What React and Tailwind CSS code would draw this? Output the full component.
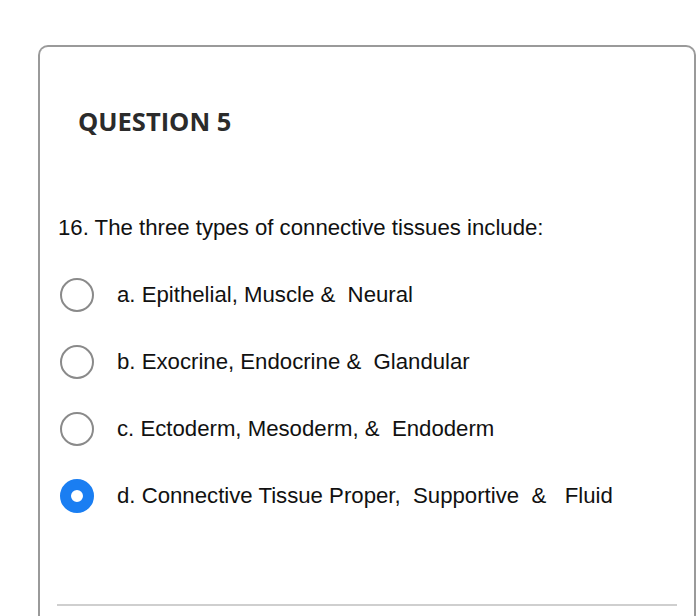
const options = [
  { label: 'a. Epithelial, Muscle &\u00a0 Neural', selected: false },
  { label: 'b. Exocrine, Endocrine &\u00a0 Glandular', selected: false },
  { label: 'c. Ectoderm, Mesoderm, &\u00a0 Endoderm', selected: false },
  {
    label: 'd. Connective Tissue Proper,\u00a0 Supportive\u00a0 &\u00a0\u00a0 Fluid',
    selected: true,
  },
];

function Radio({ selected }) {
  return selected ? (
    <span className="box-border block h-[34px] w-[34px] shrink-0 rounded-full border-[11px] border-[#1a7ef2] bg-white" />
  ) : (
    <span className="box-border block h-[34px] w-[34px] shrink-0 rounded-full border-2 border-[#8a8a8a] bg-white" />
  );
}

export default function App() {
  return (
    <div className="h-[616px] w-[700px] overflow-hidden bg-white pt-[45px] pl-[38px]">
      <div className="h-[620px] w-[658px] rounded-t-[10px] border-2 border-b-0 border-[#9a9a9a] pt-[57px]">
        {/* header */}
        <h2 className="pl-[38px] font-['Open_Sans',sans-serif] text-[25.5px] leading-[34px] font-bold text-[#2b2b2b]">
          QUESTION 5
        </h2>

        {/* question */}
        <p className="mt-[77px] pl-[18px] font-['Liberation_Sans',Arial,sans-serif] text-[22.2px] leading-[26px] text-[#111]">
          16. The three types of connective tissues include:
        </p>

        <ul className="mt-[37px] flex flex-col gap-[33px] pl-[20px]">
          {options.map((o) => (
            <li key={o.label} className="flex items-center gap-[23px]">
              <Radio selected={o.selected} />
              <span className="font-['Liberation_Sans',Arial,sans-serif] text-[22.2px] leading-[34px] text-[#111]">
                {o.label}
              </span>
            </li>
          ))}
        </ul>

        <div className="mt-[91px] ml-[17px] h-[2px] w-[620px] bg-[#cfcfcf]" />
      </div>
    </div>
  );
}
